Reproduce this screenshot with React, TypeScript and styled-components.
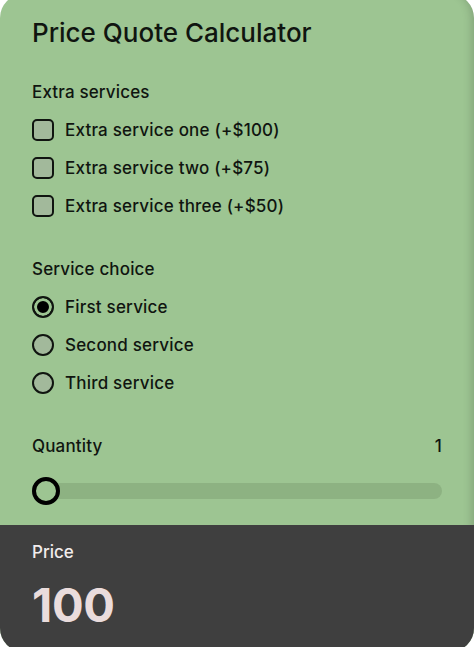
import {useState} from 'react';
import styled, {createGlobalStyle} from 'styled-components';

const GlobalStyle = createGlobalStyle`
    html, body {
        margin: 0;
        padding: 0;
        background: #fff;
        overflow: hidden;
    }
    body {
        font-family: Inter, "Noto Sans", "Liberation Sans", sans-serif;
        -webkit-font-smoothing: antialiased;
    }
`;

const extras = [
    {id: 'one', label: 'Extra service one', price: 100},
    {id: 'two', label: 'Extra service two', price: 75},
    {id: 'three', label: 'Extra service three', price: 50},
];

const services = [
    {id: 'first', label: 'First service', price: 100},
    {id: 'second', label: 'Second service', price: 150},
    {id: 'third', label: 'Third service', price: 200},
];

/**
 * Price quote calculator card
 */
const App = () => {
    const [picked, setPicked] = useState<string[]>([]);
    const [service, setService] = useState('first');
    const [quantity, setQuantity] = useState(1);

    const toggleExtra = (id: string) => {
        setPicked(prev => prev.includes(id) ? prev.filter(p => p !== id) : [...prev, id]);
    };

    const base = services.find(s => s.id === service)?.price ?? 0;
    const extraTotal = extras
        .filter(e => picked.includes(e.id))
        .reduce((sum, e) => sum + e.price, 0);
    const total = (base + extraTotal) * quantity;

    return <>
        <GlobalStyle/>
        <Card>
            <Form>
                <Title>Price Quote Calculator</Title>

                <Group>
                    <GroupLabel>Extra services</GroupLabel>
                    {extras.map(item => (
                        <Option key={item.id}>
                            <CheckBox
                                type="checkbox"
                                checked={picked.includes(item.id)}
                                onChange={() => toggleExtra(item.id)}
                            />
                            {item.label} (+${item.price})
                        </Option>
                    ))}
                </Group>

                <Group>
                    <GroupLabel>Service choice</GroupLabel>
                    {services.map(item => (
                        <Option key={item.id}>
                            <Radio
                                type="radio"
                                name="service"
                                checked={service === item.id}
                                onChange={() => setService(item.id)}
                            />
                            {item.label}
                        </Option>
                    ))}
                </Group>

                <QuantityBlock>
                    <QuantityHead>
                        <span>Quantity</span>
                        <span>{quantity}</span>
                    </QuantityHead>
                    <Slider
                        type="range"
                        min={1}
                        max={10}
                        value={quantity}
                        onChange={ev => setQuantity(Number(ev.target.value))}
                    />
                </QuantityBlock>
            </Form>

            <Summary>
                <SummaryLabel>Price</SummaryLabel>
                <Total>{total}</Total>
            </Summary>
        </Card>
    </>;
};

export default App;



const green = '#9dc592';
const ink = '#101510';


const Card = styled.div`
    margin-top: -6px;
    height: 658px;
    display: flex;
    flex-direction: column;
    border-radius: 24px;
    overflow: hidden;
    background: ${green};
    box-shadow: inset -10px 0 10px -8px rgba(0, 0, 0, .18);
`;


const Form = styled.div`
    display: flex;
    flex-direction: column;
    gap: 39px;
    padding: 23px 32px 20px;
    color: ${ink};
`;


const Title = styled.h1`
    margin: 0 0 -8px;
    font-size: 26px;
    line-height: 32px;
    font-weight: 500;
`;


const Group = styled.div`
    display: flex;
    flex-direction: column;
    gap: 14px;
`;


const GroupLabel = styled.div`
    font-size: 17px;
    line-height: 24px;
    font-weight: 500;
    letter-spacing: 0.15px;
`;


const Option = styled.label`
    display: flex;
    align-items: center;
    gap: 11px;
    height: 24px;
    font-size: 17px;
    font-weight: 500;
    letter-spacing: 0.2px;
    cursor: pointer;
`;


const CheckBox = styled.input`
    appearance: none;
    margin: 0;
    width: 22px;
    height: 22px;
    box-sizing: border-box;
    border: 2px solid ${ink};
    border-radius: 5px;
    background: #a2b99b;
    cursor: pointer;

    &:checked {
        background: ${ink};
        box-shadow: inset 0 0 0 3px #a2b99b;
    }
`;


const Radio = styled(CheckBox)`
    border-radius: 50%;

    &:checked {
        background: #000;
        box-shadow: inset 0 0 0 3px ${green};
    }
`;


const QuantityBlock = styled.div`
    display: flex;
    flex-direction: column;
    gap: 19px;
`;


const QuantityHead = styled.div`
    display: flex;
    justify-content: space-between;
    font-size: 17px;
    line-height: 24px;
    font-weight: 500;
    letter-spacing: 0.15px;
`;


const Slider = styled.input`
    appearance: none;
    margin: 0;
    width: 100%;
    height: 28px;
    background: transparent;
    cursor: pointer;

    &::-webkit-slider-runnable-track {
        height: 16px;
        border-radius: 8px;
        background: #8db282;
    }

    &::-webkit-slider-thumb {
        appearance: none;
        width: 28px;
        height: 28px;
        margin-top: -6px;
        box-sizing: border-box;
        border: 4px solid #000;
        border-radius: 50%;
        background: ${green};
    }
`;


const Summary = styled.div`
    flex: 1;
    display: flex;
    flex-direction: column;
    gap: 13px;
    padding: 15px 32px;
    background: #3f3f3f;
`;


const SummaryLabel = styled.div`
    font-size: 17px;
    line-height: 24px;
    font-weight: 500;
    color: #f1ecec;
`;


const Total = styled.div`
    font-size: 47px;
    line-height: 56px;
    font-weight: 700;
    color: #eadcdc;
    letter-spacing: -0.3px;
`;
